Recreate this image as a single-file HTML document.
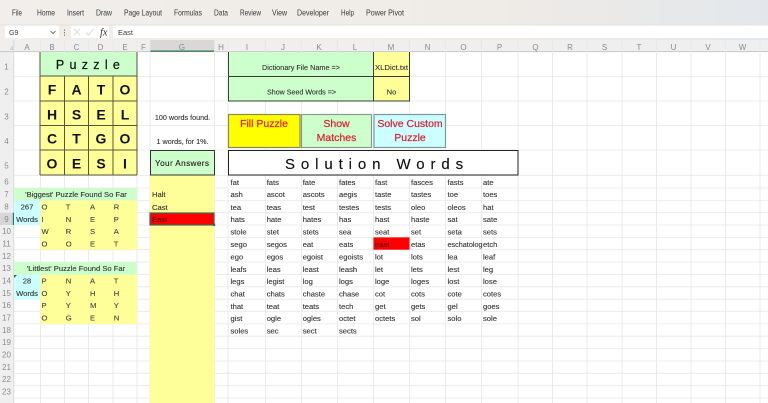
<!DOCTYPE html>
<html><head><meta charset="utf-8"><style>
html,body{margin:0;padding:0;width:768px;height:403px;overflow:hidden;background:#fff}
svg{display:block;filter:blur(.35px)}
text{font-family:"Liberation Sans",sans-serif}
.t{font-size:8.5px;fill:#3a3a3a}
.h{font-size:8px;fill:#8a8a8a;text-anchor:middle}
.w{font-size:7.6px;fill:#333;stroke:#333;stroke-width:.12}
.c{font-size:7.6px;fill:#333;stroke:#333;stroke-width:.12;text-anchor:middle}
.b{font-size:15px;font-weight:bold;fill:#111;text-anchor:middle}
.l{font-size:7.6px;fill:#444;stroke:#444;stroke-width:.12}
.r{font-size:10.5px;fill:#e0182f;stroke:#e0182f;stroke-width:.2;text-anchor:middle}
</style></head><body>
<svg width="768" height="403" viewBox="0 0 768 403" xmlns="http://www.w3.org/2000/svg">
<defs><linearGradient id="g" x1="0" x2="1" y1="0" y2="0"><stop offset="0" stop-color="#f1eeeb"/><stop offset=".65" stop-color="#efebe6"/><stop offset="1" stop-color="#e3e7ec"/></linearGradient></defs>
<rect width="768" height="403" fill="#fff"/>
<rect width="768" height="40" fill="url(#g)"/>
<rect x="0" y="24.5" width="768" height="1" fill="#e4e2df"/>
<rect x="0" y="40" width="768" height="12" fill="#efefef"/>
<rect x="0" y="52" width="14" height="351" fill="#efefef"/>
<rect x="0" y="51.2" width="768" height=".9" fill="#c4c4c4"/>
<rect x="13.4" y="40" width=".8" height="363" fill="#d4d4d4"/>
<text class="t" x="12" y="15.5" textLength="10" lengthAdjust="spacingAndGlyphs">File</text>
<text class="t" x="37" y="15.5" textLength="18" lengthAdjust="spacingAndGlyphs">Home</text>
<text class="t" x="67" y="15.5" textLength="17" lengthAdjust="spacingAndGlyphs">Insert</text>
<text class="t" x="96" y="15.5" textLength="16" lengthAdjust="spacingAndGlyphs">Draw</text>
<text class="t" x="124" y="15.5" textLength="38" lengthAdjust="spacingAndGlyphs">Page Layout</text>
<text class="t" x="174" y="15.5" textLength="28" lengthAdjust="spacingAndGlyphs">Formulas</text>
<text class="t" x="214" y="15.5" textLength="14" lengthAdjust="spacingAndGlyphs">Data</text>
<text class="t" x="240" y="15.5" textLength="21" lengthAdjust="spacingAndGlyphs">Review</text>
<text class="t" x="272" y="15.5" textLength="15" lengthAdjust="spacingAndGlyphs">View</text>
<text class="t" x="297" y="15.5" textLength="32" lengthAdjust="spacingAndGlyphs">Developer</text>
<text class="t" x="341" y="15.5" textLength="13" lengthAdjust="spacingAndGlyphs">Help</text>
<text class="t" x="366" y="15.5" textLength="38" lengthAdjust="spacingAndGlyphs">Power Pivot</text>
<rect x="5" y="25.5" width="54" height="12.5" rx="2" fill="#fff"/>
<text class="t" x="9" y="35" style="font-size:7px">G9</text>
<path d="M50.5 31l2.500 2.500 2.500-2.500" fill="none" stroke="#555" stroke-width=".8"/>
<path d="M64.500 29.500v1.200M64.500 32v1.200M64.500 34.500v1.200" stroke="#777" stroke-width="1"/>
<rect x="71" y="25.500" width="38" height="12.500" rx="2" fill="#fff"/>
<path d="M74 29l6 6M80 29l-6 6" stroke="#dcdcdc" stroke-width="1" fill="none"/>
<path d="M86 32.500l2.500 2.500 5-6" stroke="#dcdcdc" stroke-width="1" fill="none"/>
<text x="100" y="35.500" style="font-family:'Liberation Serif',serif;font-size:10.500px;font-style:italic;fill:#333">fx</text>
<rect x="113" y="25.500" width="655" height="12.500" fill="#fff"/>
<text class="t" x="118" y="35" style="font-size:7.500px">East</text>
<rect x="150" y="40" width="64.500" height="11.500" fill="#d8d8d8"/>
<rect x="150" y="50.500" width="64.500" height="1.300" fill="#2f7a50"/>
<rect x="0" y="212.700" width="14" height="12.300" fill="#d8d8d8"/>
<rect x="12.800" y="212.700" width="1.300" height="12.300" fill="#2f7a50"/>
<path d="M14 45l-3.500 5h3.500z" fill="#d0d0d0" transform="translate(-1 0)"/>
<g>
<text class="h" x="27" y="50">A</text><text class="h" x="52" y="50">B</text><text class="h" x="76.500" y="50">C</text><text class="h" x="100.500" y="50">D</text><text class="h" x="125" y="50">E</text><text class="h" x="143.500" y="50">F</text><text class="h" x="182" y="50">G</text><text class="h" x="221" y="50">H</text><text class="h" x="247" y="50">I</text><text class="h" x="283" y="50">J</text><text class="h" x="319" y="50">K</text><text class="h" x="355" y="50">L</text><text class="h" x="391" y="50">M</text><text class="h" x="427.500" y="50">N</text><text class="h" x="463.500" y="50">O</text><text class="h" x="499.500" y="50">P</text><text class="h" x="535.500" y="50">Q</text><text class="h" x="570" y="50">R</text><text class="h" x="604.500" y="50">S</text><text class="h" x="639" y="50">T</text><text class="h" x="673.500" y="50">U</text><text class="h" x="708" y="50">V</text><text class="h" x="742.500" y="50">W</text>
<text class="h" x="6.500" y="69.500">1</text><text class="h" x="6.500" y="94.500">2</text><text class="h" x="6.500" y="119.500">3</text><text class="h" x="6.500" y="144">4</text><text class="h" x="6.500" y="168.500">5</text><text class="h" x="6.500" y="184.500">6</text><text class="h" x="6.500" y="197">7</text><text class="h" x="6.500" y="209.500">8</text><text class="h" x="6.500" y="222">9</text><text class="h" x="6.500" y="234">10</text><text class="h" x="6.500" y="246.500">11</text><text class="h" x="6.500" y="259">12</text><text class="h" x="6.500" y="271">13</text><text class="h" x="6.500" y="283.500">14</text><text class="h" x="6.500" y="296">15</text><text class="h" x="6.500" y="308">16</text><text class="h" x="6.500" y="320.500">17</text><text class="h" x="6.500" y="333">18</text><text class="h" x="6.500" y="345">19</text><text class="h" x="6.500" y="357.500">20</text><text class="h" x="6.500" y="370">21</text><text class="h" x="6.500" y="382">22</text><text class="h" x="6.500" y="394.500">23</text>
</g>
<path d="M40.500 40V403M64.500 40V403M88.500 40V403M113 40V403M137 40V403M150 40V403M214.500 40V403M228 40V403M265.500 40V403M301.500 40V403M337.500 40V403M373.500 40V403M409.500 40V403M445.500 40V403M481.500 40V403M518 40V403M552.500 40V403M587 40V403M622 40V403M656.500 40V403M691 40V403M725.500 40V403M760 40V403" stroke="#e6e6e6" stroke-width=".8" fill="none"/>
<path d="M14 76.500H768M14 101H768M14 125.500H768M14 150H768M14 175.300H768M14 188H768M14 200.400H768M14 212.700H768M14 225H768M14 237.400H768M14 249.700H768M14 262H768M14 274.500H768M14 286.800H768M14 299.200H768M14 311.500H768M14 323.900H768M14 336.200H768M14 348.600H768M14 361H768M14 373.300H768M14 385.700H768M14 398H768" stroke="#e8e8e8" stroke-width=".8" fill="none"/>

<!-- Puzzle -->
<rect x="40" y="52" width="97" height="24.500" fill="#ccffcc"/>
<rect x="40" y="76" width="97" height="99" fill="#ffff99"/>
<path d="M40 52V175M137 52V175M40 175H137M40 76H137M40 101H137M40 125.500H137M40 150H137M64.500 76V175M88.500 76V175M113 76V175" stroke="#55553a" stroke-width="1" fill="none"/>
<text x="90.500" y="69" style="font-size:12.500px;letter-spacing:5.300px;fill:#111;stroke:#111;stroke-width:.2;text-anchor:middle">Puzzle</text>
<g>
<text class="b" x="52" y="94.500" style="font-size:14px">F</text><text class="b" x="76.500" y="94.500" style="font-size:14px">A</text><text class="b" x="101" y="94.500" style="font-size:14px">T</text><text class="b" x="125" y="94.500" style="font-size:14px">O</text>
<text class="b" x="52" y="119.500" style="font-size:14px">H</text><text class="b" x="76.500" y="119.500" style="font-size:14px">S</text><text class="b" x="101" y="119.500" style="font-size:14px">E</text><text class="b" x="125" y="119.500" style="font-size:14px">L</text>
<text class="b" x="52" y="143.500" style="font-size:14px">C</text><text class="b" x="76.500" y="143.500" style="font-size:14px">T</text><text class="b" x="101" y="143.500" style="font-size:14px">G</text><text class="b" x="125" y="143.500" style="font-size:14px">O</text>
<text class="b" x="52" y="168.500" style="font-size:14px">O</text><text class="b" x="76.500" y="168.500" style="font-size:14px">E</text><text class="b" x="101" y="168.500" style="font-size:14px">S</text><text class="b" x="125" y="168.500" style="font-size:14px">I</text>
</g>

<!-- G column -->
<rect x="150" y="175" width="64.500" height="228" fill="#ffff99"/>
<rect x="150.500" y="150.500" width="64" height="24.500" fill="#ccffcc" stroke="#333" stroke-width="1"/>
<text class="c" x="182.500" y="120" style="font-size:7.200px">100 words found.</text>
<text class="c" x="182.500" y="144" style="font-size:7.200px">1 words, for 1%.</text>
<text class="c" x="182" y="166" style="font-size:8.200px;fill:#111" textLength="54" lengthAdjust="spacing">Your Answers</text>
<text class="w" x="152" y="197">Halt</text>
<text class="w" x="152" y="210">Cast</text>
<rect x="150" y="213" width="64" height="12" fill="#ff0000" stroke="#3c6b50" stroke-width="1.200"/>
<rect x="212.800" y="223.500" width="2.400" height="2.400" fill="#1f7244"/>
<text class="w" x="152" y="222" style="fill:#5a0000;stroke:#5a0000">East</text>

<!-- Biggest -->
<rect x="14" y="188" width="123" height="12.400" fill="#ccffcc"/>
<rect x="14" y="200.400" width="26.500" height="24.600" fill="#ccffff"/>
<rect x="40.500" y="200.400" width="96.500" height="49.300" fill="#ffff99"/>
<text class="c" x="76" y="197">'Biggest' Puzzle Found So Far</text>
<text class="c" x="27" y="209.500">267</text><text class="c" x="27" y="222">Words</text>
<g>
<text class="l" x="41.500" y="209.500">O</text><text class="l" x="65.800" y="209.500">T</text><text class="l" x="90" y="209.500">A</text><text class="l" x="113.800" y="209.500">R</text>
<text class="l" x="41.500" y="222">I</text><text class="l" x="65.800" y="222">N</text><text class="l" x="90" y="222">E</text><text class="l" x="113.800" y="222">P</text>
<text class="l" x="41.500" y="234">W</text><text class="l" x="65.800" y="234">R</text><text class="l" x="90" y="234">S</text><text class="l" x="113.800" y="234">A</text>
<text class="l" x="41.500" y="246.500">O</text><text class="l" x="65.800" y="246.500">O</text><text class="l" x="90" y="246.500">E</text><text class="l" x="113.800" y="246.500">T</text>
</g>

<!-- Littlest -->
<rect x="14" y="262.200" width="123" height="12.400" fill="#ccffcc"/>
<rect x="14" y="274.600" width="26.500" height="24.700" fill="#ccffff"/>
<rect x="40.500" y="274.600" width="96.500" height="49.400" fill="#ffff99"/>
<path d="M14 275l3 0-3 3z" fill="#1f7244"/>
<text class="c" x="76" y="271">'Littlest' Puzzle Found So Far</text>
<text class="c" x="27" y="283.500">28</text><text class="c" x="27" y="296">Words</text>
<g>
<text class="l" x="41.500" y="283.500">P</text><text class="l" x="65.800" y="283.500">N</text><text class="l" x="90" y="283.500">A</text><text class="l" x="113.800" y="283.500">T</text>
<text class="l" x="41.500" y="296">O</text><text class="l" x="65.800" y="296">Y</text><text class="l" x="90" y="296">H</text><text class="l" x="113.800" y="296">H</text>
<text class="l" x="41.500" y="308">P</text><text class="l" x="65.800" y="308">Y</text><text class="l" x="90" y="308">M</text><text class="l" x="113.800" y="308">Y</text>
<text class="l" x="41.500" y="320.500">O</text><text class="l" x="65.800" y="320.500">G</text><text class="l" x="90" y="320.500">E</text><text class="l" x="113.800" y="320.500">N</text>
</g>

<!-- Dictionary block -->
<rect x="228.500" y="52" width="145" height="24.500" fill="#ccffcc"/>
<rect x="228.500" y="76.500" width="145" height="24.500" fill="#ccffcc"/>
<rect x="373.500" y="52" width="36" height="49" fill="#ffff99"/>
<path d="M228.500 52V101H409.500V52M228.500 76.500H409.500M373.500 52V101" stroke="#33402f" stroke-width="1" fill="none"/>
<text class="c" x="301" y="70" textLength="78" lengthAdjust="spacingAndGlyphs">Dictionary File Name =&gt;</text>
<text class="c" x="301.500" y="94.500" textLength="69" lengthAdjust="spacingAndGlyphs">Show Seed Words =&gt;</text>
<text class="c" x="391.500" y="70" textLength="33" lengthAdjust="spacingAndGlyphs">XLDict.txt</text>
<text class="c" x="391.500" y="94.500">No</text>

<!-- Buttons -->
<rect x="228.500" y="114.500" width="71.500" height="33" fill="#ffff00" stroke="#8a8a50" stroke-width="1.200"/>
<rect x="301.500" y="114.500" width="70" height="33" fill="#ccffcc" stroke="#8a9a8a" stroke-width="1.200"/>
<rect x="374" y="114.500" width="71.500" height="33" fill="#ccffff" stroke="#7a9a9a" stroke-width="1.200"/>
<text class="r" x="264" y="127">Fill Puzzle</text>
<text class="r" x="336.500" y="127">Show</text>
<text class="r" x="336.500" y="141">Matches</text>
<text class="r" x="410" y="127">Solve Custom</text>
<text class="r" x="410" y="141">Puzzle</text>

<!-- Solution words -->
<rect x="228.500" y="150.500" width="289.500" height="24.500" fill="#fff" stroke="#222" stroke-width="1"/>
<text x="377" y="169" style="font-size:15px;letter-spacing:5.900px;fill:#111;stroke:#111;stroke-width:.15;text-anchor:middle">Solution Words</text>

<rect x="373.500" y="237.400" width="36" height="12.300" fill="#ff0000"/>
<g>
<text class="w" x="230.500" y="185">fat</text><text class="w" x="266.700" y="185">fats</text><text class="w" x="302.700" y="185">fate</text><text class="w" x="339" y="185">fates</text><text class="w" x="375" y="185">fast</text><text class="w" x="411" y="185">fasces</text><text class="w" x="447.500" y="185">fasts</text><text class="w" x="483" y="185">ate</text>
<text class="w" x="230.500" y="197">ash</text><text class="w" x="266.700" y="197">ascot</text><text class="w" x="302.700" y="197">ascots</text><text class="w" x="339" y="197">aegis</text><text class="w" x="375" y="197">taste</text><text class="w" x="411" y="197">tastes</text><text class="w" x="447.500" y="197">toe</text><text class="w" x="483" y="197">toes</text>
<text class="w" x="230.500" y="210">tea</text><text class="w" x="266.700" y="210">teas</text><text class="w" x="302.700" y="210">test</text><text class="w" x="339" y="210">testes</text><text class="w" x="375" y="210">tests</text><text class="w" x="411" y="210">oleo</text><text class="w" x="447.500" y="210">oleos</text><text class="w" x="483" y="210">hat</text>
<text class="w" x="230.500" y="222">hats</text><text class="w" x="266.700" y="222">hate</text><text class="w" x="302.700" y="222">hates</text><text class="w" x="339" y="222">has</text><text class="w" x="375" y="222">hast</text><text class="w" x="411" y="222">haste</text><text class="w" x="447.500" y="222">sat</text><text class="w" x="483" y="222">sate</text>
<text class="w" x="230.500" y="234.500">stole</text><text class="w" x="266.700" y="234.500">stet</text><text class="w" x="302.700" y="234.500">stets</text><text class="w" x="339" y="234.500">sea</text><text class="w" x="375" y="234.500">seat</text><text class="w" x="411" y="234.500">set</text><text class="w" x="447.500" y="234.500">seta</text><text class="w" x="483" y="234.500">sets</text>
<text class="w" x="230.500" y="247">sego</text><text class="w" x="266.700" y="247">segos</text><text class="w" x="302.700" y="247">eat</text><text class="w" x="339" y="247">eats</text><text class="w" x="375" y="247" style="fill:#5a0000;stroke:#5a0000">east</text><text class="w" x="411" y="247">etas</text><text class="w" x="447.500" y="247" textLength="35" lengthAdjust="spacingAndGlyphs">eschatolog</text><text class="w" x="483" y="247">etch</text>
<text class="w" x="230.500" y="259.500">ego</text><text class="w" x="266.700" y="259.500">egos</text><text class="w" x="302.700" y="259.500">egoist</text><text class="w" x="339" y="259.500">egoists</text><text class="w" x="375" y="259.500">lot</text><text class="w" x="411" y="259.500">lots</text><text class="w" x="447.500" y="259.500">lea</text><text class="w" x="483" y="259.500">leaf</text>
<text class="w" x="230.500" y="272">leafs</text><text class="w" x="266.700" y="272">leas</text><text class="w" x="302.700" y="272">least</text><text class="w" x="339" y="272">leash</text><text class="w" x="375" y="272">let</text><text class="w" x="411" y="272">lets</text><text class="w" x="447.500" y="272">lest</text><text class="w" x="483" y="272">leg</text>
<text class="w" x="230.500" y="284">legs</text><text class="w" x="266.700" y="284">legist</text><text class="w" x="302.700" y="284">log</text><text class="w" x="339" y="284">logs</text><text class="w" x="375" y="284">loge</text><text class="w" x="411" y="284">loges</text><text class="w" x="447.500" y="284">lost</text><text class="w" x="483" y="284">lose</text>
<text class="w" x="230.500" y="296.500">chat</text><text class="w" x="266.700" y="296.500">chats</text><text class="w" x="302.700" y="296.500">chaste</text><text class="w" x="339" y="296.500">chase</text><text class="w" x="375" y="296.500">cot</text><text class="w" x="411" y="296.500">cots</text><text class="w" x="447.500" y="296.500">cote</text><text class="w" x="483" y="296.500">cotes</text>
<text class="w" x="230.500" y="309">that</text><text class="w" x="266.700" y="309">teat</text><text class="w" x="302.700" y="309">teats</text><text class="w" x="339" y="309">tech</text><text class="w" x="375" y="309">get</text><text class="w" x="411" y="309">gets</text><text class="w" x="447.500" y="309">gel</text><text class="w" x="483" y="309">goes</text>
<text class="w" x="230.500" y="321">gist</text><text class="w" x="266.700" y="321">ogle</text><text class="w" x="302.700" y="321">ogles</text><text class="w" x="339" y="321">octet</text><text class="w" x="375" y="321">octets</text><text class="w" x="411" y="321">sol</text><text class="w" x="447.500" y="321">solo</text><text class="w" x="483" y="321">sole</text>
<text class="w" x="230.500" y="333.500">soles</text><text class="w" x="266.700" y="333.500">sec</text><text class="w" x="302.700" y="333.500">sect</text><text class="w" x="339" y="333.500">sects</text>
</g>
</svg>
</body></html>
